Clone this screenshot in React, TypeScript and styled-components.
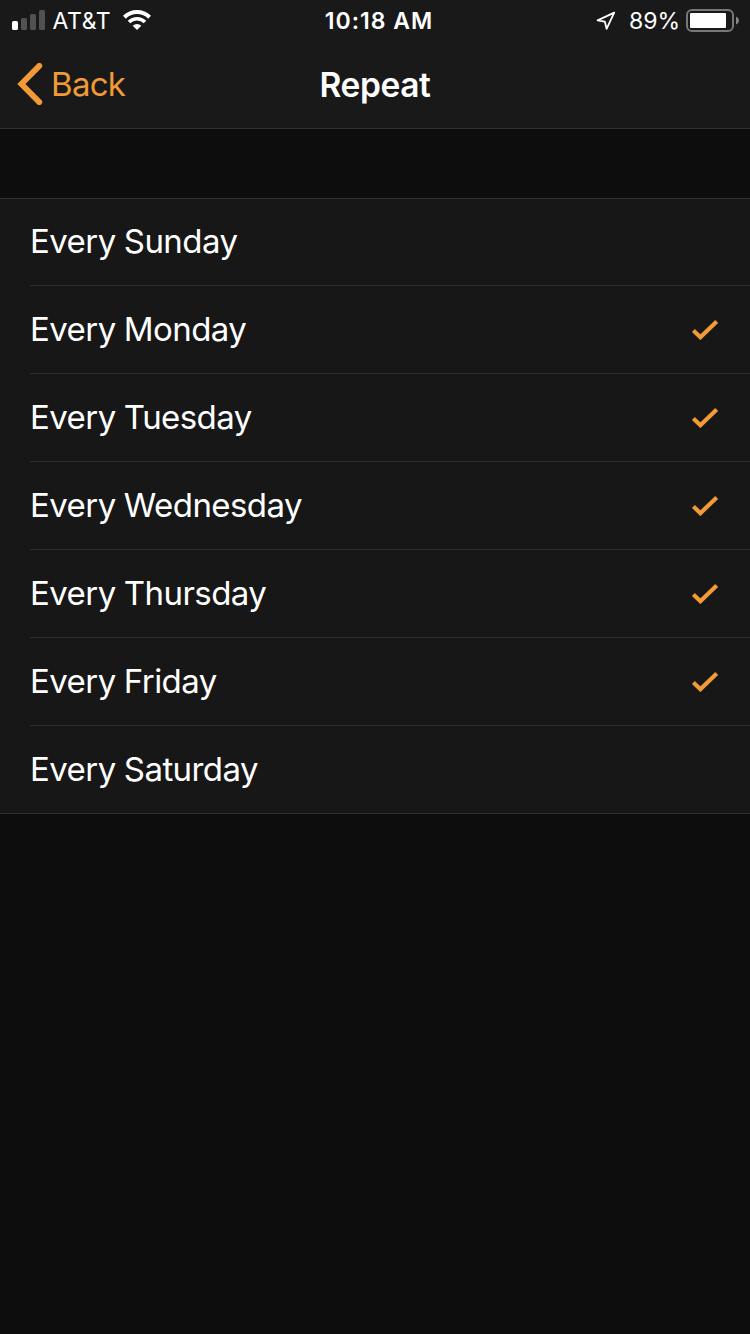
import React from 'react';
import styled, { createGlobalStyle } from 'styled-components';

const palette = {
    page: '#0d0d0d',
    surface: '#171717',
    line: '#303032',
    accent: '#f19a37',
    text: '#ffffff',
};

const GlobalStyle = createGlobalStyle`
    body {
        margin: 0;
        background-color: ${palette.page};
        font-family: Inter, 'Liberation Sans', sans-serif;
        color: ${palette.text};
    }
`

const Screen = styled.div`
    width: 750px;
    min-height: 1334px;
    background-color: ${palette.page};
`

const Header = styled.header`
    height: 128px;
    background-color: #191919;
    border-bottom: 1px solid ${palette.line};
`

const StatusBar = styled.div`
    display: grid;
    grid-template-columns: 1fr auto 1fr;
    align-items: center;
    height: 40px;
    padding: 0 11px 0 12px;
    font-size: 23px;
    line-height: 38px;
`

const StatusGroup = styled.div<{ $end?: boolean }>`
    display: flex;
    align-items: center;
    justify-content: ${(props) => props.$end ? 'flex-end' : 'flex-start'};
`

const Carrier = styled.span`
    padding-top: 2px;
    margin: 0 12px 0 6.5px;
    letter-spacing: 0.6px;
`

const Clock = styled.span`
    padding: 2px 0 0 7px;
    font-weight: 600;
    letter-spacing: 1px;
`

const Percent = styled.span`
    padding-top: 2px;
    margin: 0 6px 0 13px;
`

const NavBar = styled.nav`
    display: grid;
    grid-template-columns: 1fr auto 1fr;
    align-items: center;
    height: 88px;
    padding: 0 17px;
`

const BackButton = styled.button`
    display: flex;
    align-items: center;
    gap: 8px;
    padding: 0;
    border: 0;
    background: none;
    color: ${palette.accent};
    font-family: inherit;
    font-size: 33px;
    letter-spacing: -0.7px;
`

const BackLabel = styled.span`
    padding-top: 1px;
    line-height: 41px;
`

const Title = styled.h1`
    margin: 0;
    padding-top: 2px;
    font-size: 33.5px;
    font-weight: 600;
    line-height: 41px;
    letter-spacing: -0.4px;
`

const DayList = styled.ul`
    margin: 69px 0 0;
    padding: 0;
    list-style: none;
    background-color: ${palette.surface};
    border-top: 1px solid ${palette.line};
    border-bottom: 1px solid ${palette.line};
`

const DayRow = styled.li`
    box-sizing: border-box;
    display: flex;
    align-items: center;
    justify-content: space-between;
    height: 88px;
    margin-left: 30px;
    padding-right: 31px;
    border-bottom: 1px solid ${palette.line};

    &:first-child {
        height: 87px;
        padding-bottom: 1px;
    }

    &:last-child {
        border-bottom: 0;
        height: 87px;
    }
`

const DayName = styled.span`
    padding-bottom: 1px;
    font-size: 33px;
    line-height: 40px;
    letter-spacing: -0.57px;
    word-spacing: -0.5px;
`

const SignalIcon = () => (
    <svg width="34" height="22" viewBox="0 0 34 22">
        <rect x="0" y="12" width="6" height="9" rx="1.5" fill="#fff" />
        <rect x="9" y="9" width="6" height="12" rx="1.5" fill="#515151" />
        <rect x="18" y="5" width="6" height="16" rx="1.5" fill="#515151" />
        <rect x="27" y="1" width="6" height="20" rx="1.5" fill="#515151" />
    </svg>
)

const WifiIcon = () => (
    <svg width="28" height="22" viewBox="0 0 28 22" fill="none" stroke="#fff">
        <path d="M1.4 8.2A18 18 0 0 1 26.6 8.2" strokeWidth="4" />
        <path d="M6 13A11.3 11.3 0 0 1 22 13" strokeWidth="3.6" />
        <path d="M14 21L9.7 16.7A6.4 6.4 0 0 1 18.3 16.7Z" fill="#fff" stroke="none" />
    </svg>
)

const LocationIcon = () => (
    <svg width="20" height="20" viewBox="0 0 20 20" fill="none" stroke="#fff" strokeWidth="1.8" strokeLinejoin="round">
        <path d="M18.2 2.6L1.6 10.4L8.8 11.6L10.6 18.8Z" />
    </svg>
)

const BatteryIcon = () => (
    <svg width="53" height="24" viewBox="0 0 53 24">
        <rect x="1" y="2" width="46" height="21" rx="5" fill="none" stroke="#777" strokeWidth="2" />
        <rect x="4" y="5" width="36" height="15" rx="1" fill="#fff" />
        <path d="M50 8.5Q53 9.8 53 12.5T50 16.5Z" fill="#888" />
    </svg>
)

const BackIcon = () => (
    <svg width="26" height="42" viewBox="0 0 26 42" fill="none" stroke={palette.accent} strokeWidth="5.8" strokeLinecap="round">
        <path d="M22.3 2.9L4.4 21L22.3 39.1" />
    </svg>
)

const CheckIcon = () => (
    <svg width="28" height="21" viewBox="0 0 28 21" fill="none" stroke={palette.accent} strokeWidth="4.2">
        <path d="M2.4 11.4L9.4 18.2L25.7 2.4" />
    </svg>
)

const days = [
    { name: 'Sunday', checked: false },
    { name: 'Monday', checked: true },
    { name: 'Tuesday', checked: true },
    { name: 'Wednesday', checked: true },
    { name: 'Thursday', checked: true },
    { name: 'Friday', checked: true },
    { name: 'Saturday', checked: false },
];

const App = () => {
    return (
        <Screen>
            <GlobalStyle />
            <Header>
                <StatusBar>
                    <StatusGroup>
                        <SignalIcon />
                        <Carrier>AT&amp;T</Carrier>
                        <WifiIcon />
                    </StatusGroup>
                    <Clock>10:18 AM</Clock>
                    <StatusGroup $end>
                        <LocationIcon />
                        <Percent>89%</Percent>
                        <BatteryIcon />
                    </StatusGroup>
                </StatusBar>
                <NavBar>
                    <BackButton>
                        <BackIcon />
                        <BackLabel>Back</BackLabel>
                    </BackButton>
                    <Title>Repeat</Title>
                </NavBar>
            </Header>
            <DayList>
                {days.map(day => (
                    <DayRow key={day.name}>
                        <DayName>Every {day.name}</DayName>
                        {day.checked && <CheckIcon />}
                    </DayRow>
                ))}
            </DayList>
        </Screen>
    );
}

export default App;
